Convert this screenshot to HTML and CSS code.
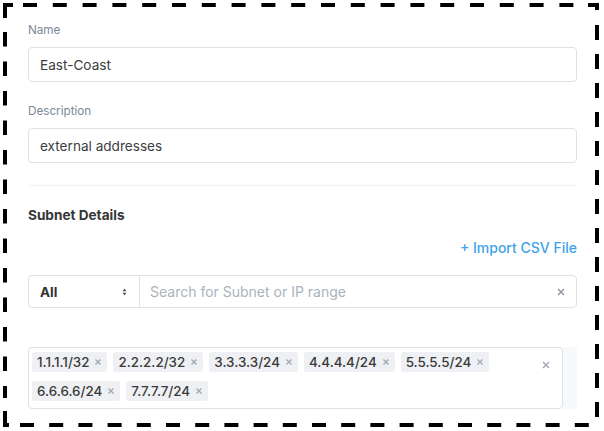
FILE: index.html
```html
<!DOCTYPE html>
<html lang="en">
<head>
<meta charset="utf-8">
<title>Subnet form</title>
<link rel="stylesheet" href="styles.css">
</head>
<body>
<div class="screen">
  <svg class="frame" width="604" height="431" viewBox="0 0 604 431" aria-hidden="true">
    <g fill="none" stroke="#000" stroke-width="4" stroke-linejoin="miter">
      <path d="M5 18 V5 H13"/>
      <path d="M588 5 H597 V10"/>
      <path d="M5 411 V425 H9"/>
      <line x1="23" y1="5" x2="578" y2="5" stroke-dasharray="14 15.8"/>
      <line x1="597" y1="25" x2="597" y2="418" stroke-dasharray="15 14"/>
      <line x1="20" y1="425" x2="590" y2="425" stroke-dasharray="14 15.2"/>
      <line x1="5" y1="32" x2="5" y2="398" stroke-dasharray="14.5 15"/>
    </g>
  </svg>

  <div class="page">
    <div class="label">Name</div>
    <div class="input">East-Coast</div>

    <div class="label label-next">Description</div>
    <div class="input">external addresses</div>

    <div class="divider"></div>

    <div class="section-title">Subnet Details</div>
    <div class="import-row"><span class="import-link">+ Import CSV File</span></div>

    <div class="search-row">
      <div class="select">
        <span class="select-value">All</span>
        <svg class="sort-icon" width="5" height="8" viewBox="0 0 5 8"><path d="M0.5 3.2 L2.5 0.6 L4.5 3.2Z M0.5 4.8 L2.5 7.4 L4.5 4.8Z" fill="#555"/></svg>
      </div>
      <div class="search">
        <span class="placeholder">Search for Subnet or IP range</span>
        <svg class="clear-icon" width="8" height="8" viewBox="0 0 8 8"><path d="M1 1 L7 7 M7 1 L1 7" stroke="#8f98a3" stroke-width="1.5"/></svg>
      </div>
    </div>

    <div class="tags-row">
      <div class="tagbox">
        <div class="tags">
          <span class="tag">1.1.1.1/32<svg class="tag-x" width="6" height="6" viewBox="0 0 6 6"><path d="M0.5 0.5 L5.5 5.5 M5.5 0.5 L0.5 5.5"/></svg></span>
          <span class="tag">2.2.2.2/32<svg class="tag-x" width="6" height="6" viewBox="0 0 6 6"><path d="M0.5 0.5 L5.5 5.5 M5.5 0.5 L0.5 5.5"/></svg></span>
          <span class="tag">3.3.3.3/24<svg class="tag-x" width="6" height="6" viewBox="0 0 6 6"><path d="M0.5 0.5 L5.5 5.5 M5.5 0.5 L0.5 5.5"/></svg></span>
          <span class="tag">4.4.4.4/24<svg class="tag-x" width="6" height="6" viewBox="0 0 6 6"><path d="M0.5 0.5 L5.5 5.5 M5.5 0.5 L0.5 5.5"/></svg></span>
          <span class="tag">5.5.5.5/24<svg class="tag-x" width="6" height="6" viewBox="0 0 6 6"><path d="M0.5 0.5 L5.5 5.5 M5.5 0.5 L0.5 5.5"/></svg></span>
          <span class="tag">6.6.6.6/24<svg class="tag-x" width="6" height="6" viewBox="0 0 6 6"><path d="M0.5 0.5 L5.5 5.5 M5.5 0.5 L0.5 5.5"/></svg></span>
          <span class="tag">7.7.7.7/24<svg class="tag-x" width="6" height="6" viewBox="0 0 6 6"><path d="M0.5 0.5 L5.5 5.5 M5.5 0.5 L0.5 5.5"/></svg></span>
        </div>
        <svg class="box-clear" width="8" height="8" viewBox="0 0 8 8"><path d="M1 1 L7 7 M7 1 L1 7" stroke="#a3abb5" stroke-width="1.5"/></svg>
      </div>
      <div class="scroll-track"></div>
    </div>
  </div>
</div>
</body>
</html>
```

FILE: styles.css
```css
* { box-sizing: border-box; }

body {
  margin: 0;
  background: #fff;
  font-family: Inter, "Liberation Sans", sans-serif;
}

.screen {
  position: relative;
  width: 604px;
  height: 431px;
  overflow: hidden;
}

.frame {
  position: absolute;
  left: 0;
  top: 0;
}

.page {
  padding: 22px 27px 0 28px;
}

.label {
  font-size: 11.7px;
  line-height: 16px;
  color: #7b8898;
  margin-bottom: 9px;
}

.label-next {
  margin-top: 21px;
}

.input {
  height: 35px;
  border: 1px solid #dde2e8;
  border-radius: 4px;
  padding: 0 11px;
  display: flex;
  align-items: center;
  font-size: 13.6px;
  color: #3d3d3d;
}

.divider {
  margin-top: 22px;
  height: 1px;
  background: #f0f2f4;
}

.section-title {
  margin-top: 21px;
  font-size: 13.6px;
  line-height: 16px;
  font-weight: 700;
  color: #363636;
}

.import-row {
  margin-top: 17px;
  display: flex;
  justify-content: flex-end;
  line-height: 16px;
}

.import-link {
  font-size: 14px;
  font-weight: 500;
  color: #3ea3ea;
}

.search-row {
  margin-top: 19px;
  height: 33px;
  border: 1px solid #dde2e8;
  border-radius: 4px;
  display: flex;
}

.select {
  width: 111px;
  border-right: 1px solid #dde2e8;
  display: flex;
  align-items: center;
  justify-content: space-between;
  padding: 0 12px 0 11px;
}

.select-value {
  font-size: 13.5px;
  font-weight: 700;
  color: #333;
}

.search {
  flex: 1;
  display: flex;
  align-items: center;
  justify-content: space-between;
  padding: 0 11px 0 10px;
}

.placeholder {
  font-size: 14px;
  color: #aab3bd;
}

.tags-row {
  margin-top: 39px;
  display: flex;
  height: 62px;
}

.tagbox {
  flex: 1;
  border: 1px solid #dde2e8;
  border-radius: 4px;
  padding: 4px 12px 0 3px;
  display: flex;
  align-items: flex-start;
}

.tags {
  flex: 1;
  display: flex;
  flex-wrap: wrap;
  column-gap: 6px;
  row-gap: 9px;
  padding-right: 30px;
}

.tag {
  height: 20px;
  display: inline-flex;
  align-items: center;
  gap: 6px;
  padding: 0 6px 0 5px;
  background: #eef0f3;
  border-radius: 3px;
  font-size: 13.4px;
  font-weight: 500;
  color: #3a3a3a;
}

.tag-x path {
  stroke: #a0a9b4;
  stroke-width: 1.3;
}

.box-clear {
  margin-top: 9px;
}

.scroll-track {
  width: 14px;
  background: #f8f9fa;
}
```
